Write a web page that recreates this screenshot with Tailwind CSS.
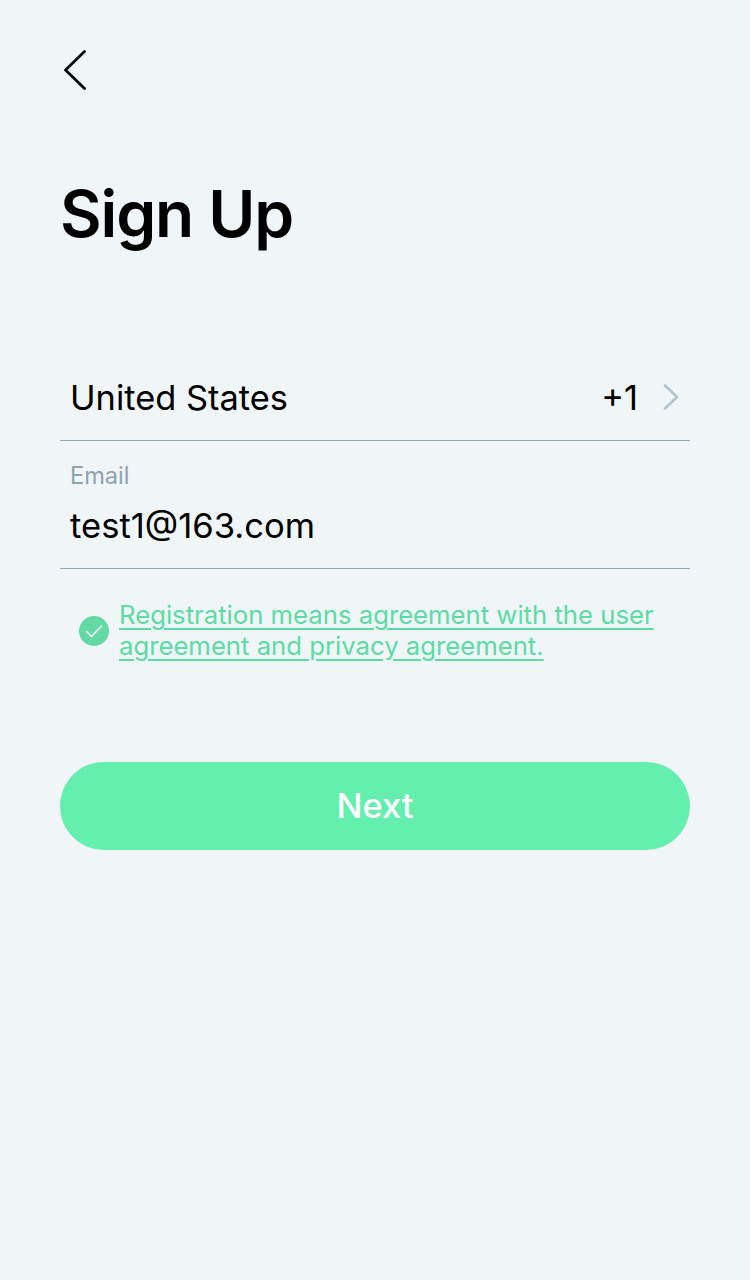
<!DOCTYPE html>
<html lang="en">
<head>
    <meta charset="UTF-8">
    <meta name="viewport" content="width=device-width, initial-scale=1.0">
    <title>Sign Up</title>
    <script src="https://cdn.jsdelivr.net/npm/@tailwindcss/browser@4"></script>
</head>
<body class="bg-[#f0f5f8] text-black font-['Inter',sans-serif]">
    <main class="w-[750px] h-[1280px] px-[60px] overflow-hidden">

        <!-- back -->
        <div class="pt-[50px] h-[90px]">
            <svg class="ml-[3px] w-[24px] h-[40px]" viewBox="0 0 24 40" fill="none" stroke="#0a0a0a" stroke-width="2.8" stroke-linecap="round" stroke-linejoin="round"><path d="M21.5 1.5 L2.5 20 L21.5 38.5"/></svg>
        </div>

        <h1 class="mt-[86px] h-[76px] text-[64px] leading-[76px] font-semibold tracking-[-1.1px]">Sign Up</h1>

        <!-- country -->
        <div class="mt-[102px] h-[87px] border-b border-[#8fa9b5] pl-[11px] pr-[11px] pt-[1px] flex items-center justify-between">
            <span class="text-[34.4px] leading-[40px] -ml-[1px]">United States</span>
            <div class="flex items-center gap-[25px]">
                <span class="text-[34.4px] leading-[40px]">+1</span>
                <svg class="w-[16px] h-[26px] -mt-[1px]" viewBox="0 0 16 26" fill="none" stroke="#b4c4cb" stroke-width="2.6" stroke-linecap="round" stroke-linejoin="round"><path d="M2 1.5 L14 13 L2 24.5"/></svg>
            </div>
        </div>

        <!-- email -->
        <div class="h-[128px] border-b border-[#8fa9b5] pl-[10px] pt-[21px]">
            <div class="text-[23.6px] leading-[28px] text-[#8fa3ad]">Email</div>
            <div class="mt-[15px] text-[34.6px] leading-[40px]">test1@163.com</div>
        </div>

        <!-- terms -->
        <div class="mt-[30px] ml-[19px] flex items-center gap-[10px]">
            <svg class="w-[30px] h-[30px] shrink-0 mt-[2px]" viewBox="0 0 30 30" fill="none"><circle cx="15" cy="15" r="15" fill="#63d9a3"/><path d="M7.5 15.5 L12.5 20.5 L22.5 10" stroke="#ffffff" stroke-width="1.6" stroke-linecap="round" stroke-linejoin="round"/></svg>
            <a class="text-[25.7px] leading-[31px] text-[#5bdca3] underline underline-offset-[4px] w-[560px]">Registration means agreement with the user agreement and privacy agreement.</a>
        </div>

        <button class="mt-[101px] w-full h-[88px] rounded-full bg-[#64efaf] text-white text-[34.5px] font-medium">Next</button>
    </main>
</body>
</html>
